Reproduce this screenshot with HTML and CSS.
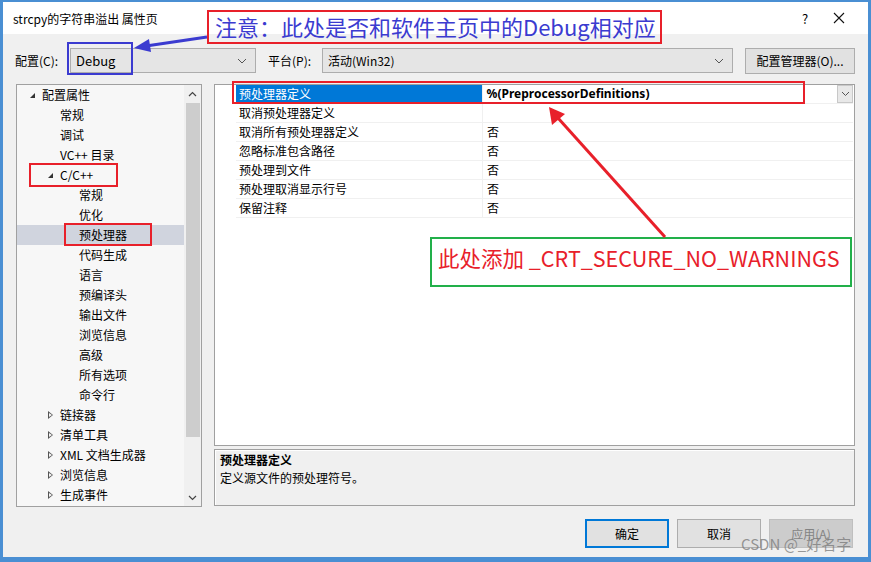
FILE: index.html
```html
<!DOCTYPE html>
<html lang="zh">
<head>
<meta charset="utf-8">
<title>strcpy的字符串溢出 属性页</title>
<link rel="stylesheet" href="styles.css">
</head>
<body>
<div class="frame">
  <div class="win">
    <div class="titlebar">
      <span class="title">strcpy的字符串溢出 属性页</span>
      <span class="tb-help">?</span>
      <span class="tb-close"><svg width="12" height="12" viewBox="0 0 12 12"><path d="M1 1L11 11M11 1L1 11" stroke="#111" stroke-width="1.1"/></svg></span>
    </div>
    <div class="cfg">
      <span class="lbl">配置(C):</span>
      <div class="combo combo-cfg"><span class="debug">Debug</span><svg class="chev" width="10" height="6" viewBox="0 0 10 6"><path d="M1 1L5 5L9 1" fill="none" stroke="#555" stroke-width="1"/></svg></div>
      <span class="lbl lbl2">平台(P):</span>
      <div class="combo combo-plat"><span>活动(Win32)</span><svg class="chev" width="10" height="6" viewBox="0 0 10 6"><path d="M1 1L5 5L9 1" fill="none" stroke="#555" stroke-width="1"/></svg></div>
      <div class="btn btn-mgr">配置管理器(O)...</div>
    </div>
    <div class="main">
      <div class="tree">
        <div class="tree-list">
          <div class="ti l0"><span class="tri open"></span>配置属性</div>
          <div class="ti l1">常规</div>
          <div class="ti l1">调试</div>
          <div class="ti l1">VC++ 目录</div>
          <div class="ti l1 hasTri"><span class="tri open"></span>C/C++</div>
          <div class="ti l2">常规</div>
          <div class="ti l2">优化</div>
          <div class="ti l2 sel">预处理器</div>
          <div class="ti l2">代码生成</div>
          <div class="ti l2">语言</div>
          <div class="ti l2">预编译头</div>
          <div class="ti l2">输出文件</div>
          <div class="ti l2">浏览信息</div>
          <div class="ti l2">高级</div>
          <div class="ti l2">所有选项</div>
          <div class="ti l2">命令行</div>
          <div class="ti l1 hasTri"><span class="tri closed"></span>链接器</div>
          <div class="ti l1 hasTri"><span class="tri closed"></span>清单工具</div>
          <div class="ti l1 hasTri"><span class="tri closed"></span>XML 文档生成器</div>
          <div class="ti l1 hasTri"><span class="tri closed"></span>浏览信息</div>
          <div class="ti l1 hasTri"><span class="tri closed"></span>生成事件</div>
        </div>
        <div class="vscroll">
          <svg class="sarrow" width="9" height="6" viewBox="0 0 9 6"><path d="M1 5L4.5 1.5L8 5" fill="none" stroke="#444" stroke-width="1.2"/></svg>
          <div class="thumb"></div>
          <div class="track-rest"></div>
          <svg class="sarrow" width="9" height="6" viewBox="0 0 9 6"><path d="M1 1L4.5 4.5L8 1" fill="none" stroke="#444" stroke-width="1.2"/></svg>
        </div>
      </div>
      <div class="right">
        <div class="grid">
          <div class="row selrow"><span class="pn">预处理器定义</span><span class="pv bold">%(PreprocessorDefinitions)</span><span class="ddbtn"><svg width="9" height="6" viewBox="0 0 9 6"><path d="M1 1L4.5 4.5L8 1" fill="none" stroke="#555" stroke-width="1"/></svg></span></div>
          <div class="row"><span class="pn">取消预处理器定义</span><span class="pv"></span></div>
          <div class="row"><span class="pn">取消所有预处理器定义</span><span class="pv">否</span></div>
          <div class="row"><span class="pn">忽略标准包含路径</span><span class="pv">否</span></div>
          <div class="row"><span class="pn">预处理到文件</span><span class="pv">否</span></div>
          <div class="row"><span class="pn">预处理取消显示行号</span><span class="pv">否</span></div>
          <div class="row"><span class="pn">保留注释</span><span class="pv">否</span></div>
        </div>
        <div class="desc">
          <div class="desc-t">预处理器定义</div>
          <div class="desc-d">定义源文件的预处理符号。</div>
        </div>
      </div>
    </div>
    <div class="btnrow">
      <div class="btn dlg ok">确定</div>
      <div class="btn dlg">取消</div>
      <div class="btn dlg dis">应用(A)</div>
    </div>
  </div>

  <div class="note">注意：此处是否和软件主页中的Debug相对应</div>
  <div class="box blue-box"></div>
  <div class="box red-cpp"></div>
  <div class="box red-pre"></div>
  <div class="box red-row"></div>
  <div class="green">此处添加 _CRT_SECURE_NO_WARNINGS</div>
  <svg class="arrows" width="871" height="562" viewBox="0 0 871 562">
    <line x1="207" y1="37" x2="146" y2="46" stroke="#3b3bd0" stroke-width="3"/>
    <polygon points="134,48 149,39 151,52" fill="#3b3bd0"/>
    <line x1="665" y1="237" x2="558" y2="118" stroke="#e8202a" stroke-width="3"/>
    <polygon points="549,107 552,125 565,114" fill="#e8202a"/>
  </svg>
  <div class="wm">CSDN @_好名字</div>
</div>
</body>
</html>
```

FILE: styles.css
```css
* { box-sizing: border-box; }
html, body { margin: 0; padding: 0; }
body {
  width: 871px; height: 562px; overflow: hidden;
  font-family: "Noto Sans CJK SC", "Noto Sans", sans-serif;
  font-size: 12px; color: #000;
}
.frame {
  position: relative;
  width: 871px; height: 562px;
  background: #4a8fd3;
  padding: 2px 3px 5px 3px;
}
.win {
  width: 865px; height: 555px;
  background: #f0f0f0;
  display: flex; flex-direction: column;
}
.titlebar {
  height: 32px; background: #fff;
  display: flex; align-items: center;
  padding-left: 10px;
  font-size: 12px;
}
.title { flex: 1; }
.tb-help { width: 34px; text-align: center; font-size: 13px; }
.tb-close { width: 34px; display: flex; justify-content: center; margin-right: 12px; }
.cfg {
  display: flex; align-items: center;
  height: 25px; margin-top: 14px;
  padding-left: 12px;
}
.lbl { width: 55px; }
.lbl2 { margin-left: 12px; width: 54px; }
.combo {
  height: 25px; background: #e5e5e5; border: 1px solid #adadad;
  display: flex; align-items: center; justify-content: space-between;
  padding: 0 8px 0 5px;
}
.combo-cfg { width: 186px; }
.debug { font-size: 13px; }
.combo-plat { width: 411px; }
.btn {
  background: #e1e1e1; border: 1px solid #adadad;
  display: flex; align-items: center; justify-content: center;
}
.btn-mgr { margin-left: 12px; width: 110px; height: 26px; }
.main {
  display: flex; margin-top: 11px; padding-left: 13px;
  gap: 12px;
}
.tree {
  width: 186px; height: 423px;
  border: 1px solid #a0a0a0; background: #f7f7f7;
  display: flex;
}
.tree-list { flex: 1; }
.ti { height: 20px; line-height: 20px; display: flex; align-items: center; white-space: nowrap; }
.l0 { padding-left: 12px; }
.l1 { padding-left: 43px; }
.l1.hasTri { padding-left: 30px; }
.l2 { padding-left: 62px; }
.ti.sel { background: #d0d4de; }
.tri { width: 13px; height: 20px; display: inline-flex; align-items: center; }
.tri.open::before {
  content: ""; width: 0; height: 0;
  border-left: 5px solid transparent; border-bottom: 5px solid #333;
  margin-left: 1px;
}
.tri.closed::before {
  content: ""; width: 0; height: 0;
  border-top: 4px solid transparent; border-bottom: 4px solid transparent;
  border-left: 5px solid #555;
  margin-left: 1px;
}
.tri.closed::after {
  content: ""; position: relative; left: -4px; width: 0; height: 0;
  border-top: 2.5px solid transparent; border-bottom: 2.5px solid transparent;
  border-left: 3px solid #f7f7f7;
}
.vscroll {
  width: 17px; background: #f0f0f0;
  display: flex; flex-direction: column; align-items: center;
}
.sarrow { margin: 6px 0 5px; flex: none; }
.thumb { width: 14px; height: 334px; background: #cdcdcd; margin-top: 1px; }
.track-rest { flex: 1; }
.right { display: flex; flex-direction: column; gap: 3px; }
.grid {
  width: 641px; height: 362px;
  border: 1px solid #a0a0a0; background: #fff;
  padding-left: 21px; padding-right: 1px;
}
.row {
  height: 19px; display: flex; align-items: center;
  border-bottom: 1px solid #f0f0f0;
}
.pn { width: 246px; padding-left: 3px; height: 18px; line-height: 18px; white-space: nowrap; }
.pv { width: 355px; padding-left: 4px; height: 18px; line-height: 18px; border-left: 1px solid #f0f0f0; }
.bold { font-weight: bold; font-family: "Noto Sans", "Noto Sans CJK SC", sans-serif; }
.selrow .pn { background: #0078d7; color: #fff; }
.ddbtn {
  width: 16px; height: 18px; background: #e8e8e8; border: 1px solid #c8c8c8;
  display: flex; align-items: center; justify-content: center;
  margin-left: 1px;
}
.desc {
  width: 641px; height: 57px;
  border: 1px solid #a0a0a0; background: #f0f0f0;
  box-shadow: inset 1px 1px 0 #fff;
  padding: 1px 5px;
}
.desc-t { font-weight: bold; height: 18px; line-height: 18px; }
.desc-d { height: 18px; line-height: 18px; }
.btnrow {
  display: flex; justify-content: flex-end; gap: 8px;
  margin-top: 12px; padding-right: 15px;
}
.dlg { width: 84px; height: 29px; }
.ok { border: 2px solid #0078d7; }
.dis { background: #cccccc; border-color: #bfbfbf; color: #838383; }

.note {
  position: absolute; left: 207px; top: 10px; width: 455px; height: 34px;
  border: 2px solid #e8202a;
  color: #3b3bd0; font-size: 22px; line-height: 28px;
  padding-left: 6px; white-space: nowrap;
}
.box { position: absolute; border: 2px solid #e8202a; }
.blue-box { left: 67px; top: 42px; width: 66px; height: 33px; border-color: #3b3bd0; }
.red-cpp { left: 29px; top: 163px; width: 89px; height: 24px; }
.red-pre { left: 64px; top: 223px; width: 88px; height: 23px; }
.red-row { left: 232px; top: 81px; width: 573px; height: 23px; }
.green {
  position: absolute; left: 430px; top: 237px; width: 422px; height: 50px;
  border: 2px solid #22b04a; background: #fff;
  color: #e8202a; font-size: 21.5px; line-height: 38px;
  padding-left: 6px; white-space: nowrap;
}
.arrows { position: absolute; left: 0; top: 0; }
.wm {
  position: absolute; left: 741px; top: 533px;
  font-size: 15px; color: rgba(120,120,120,0.75); white-space: nowrap;
  font-family: "Noto Sans CJK SC", sans-serif;
}
```
